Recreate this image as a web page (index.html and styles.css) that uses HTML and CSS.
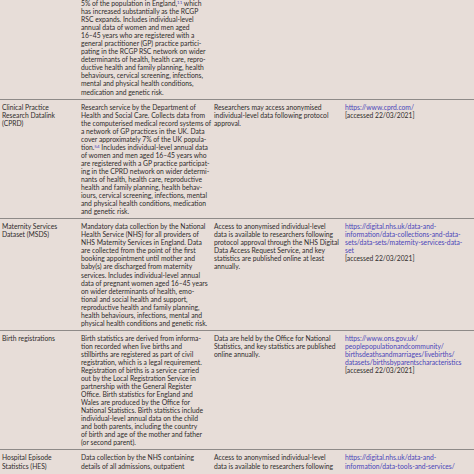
FILE: index.html
```html
<!DOCTYPE html>
<html>
<head>
<meta charset="utf-8">
<link rel="stylesheet" href="styles.css">
</head>
<body>
<div class="table">
  <div class="row first">
    <div class="cell c1"></div>
    <div class="cell c2">5% of the population in England,<sup class="ref">11</sup> which<br>has increased substantially as the RCGP<br>RSC expands. Includes individual-level<br>annual data of women and men aged<br>16–45 years who are registered with a<br>general practitioner (GP) practice partici-<br>pating in the RCGP RSC network on wider<br>determinants of health, health care, repro-<br>ductive health and family planning, health<br>behaviours, cervical screening, infections,<br>mental and physical health conditions,<br>medication and genetic risk.</div>
    <div class="cell c3"></div>
    <div class="cell c4"></div>
  </div>
  <div class="row">
    <div class="cell c1">Clinical Practice<br>Research Datalink<br>(CPRD)</div>
    <div class="cell c2">Research service by the Department of<br>Health and Social Care. Collects data from<br>the computerised medical record systems of<br>a network of GP practices in the UK. Data<br>cover approximately 7% of the UK popula-<br>tion.<sup class="ref">54</sup> Includes individual-level annual data<br>of women and men aged 16–45 years who<br>are registered with a GP practice participat-<br>ing in the CPRD network on wider determi-<br>nants of health, health care, reproductive<br>health and family planning, health behav-<br>iours, cervical screening, infections, mental<br>and physical health conditions, medication<br>and genetic risk.</div>
    <div class="cell c3">Researchers may access anonymised<br>individual-level data following protocol<br>approval.</div>
    <div class="cell c4"><span class="link">https://www.cprd.com/</span><br>[accessed 22/03/2021]</div>
  </div>
  <div class="row">
    <div class="cell c1">Maternity Services<br>Dataset (MSDS)</div>
    <div class="cell c2">Mandatory data collection by the National<br>Health Service (NHS) for all providers of<br>NHS Maternity Services in England. Data<br>are collected from the point of the first<br>booking appointment until mother and<br>baby(s) are discharged from maternity<br>services. Includes individual-level annual<br>data of pregnant women aged 16–45 years<br>on wider determinants of health, emo-<br>tional and social health and support,<br>reproductive health and family planning,<br>health behaviours, infections, mental and<br>physical health conditions and genetic risk.</div>
    <div class="cell c3">Access to anonymised individual-level<br>data is available to researchers following<br>protocol approval through the NHS Digital<br>Data Access Request Service, and key<br>statistics are published online at least<br>annually.</div>
    <div class="cell c4"><span class="link">https://digital.nhs.uk/data-and-<br>information/data-collections-and-data-<br>sets/data-sets/maternity-services-data-<br>set</span><br>[accessed 22/03/2021]</div>
  </div>
  <div class="row">
    <div class="cell c1">Birth registrations</div>
    <div class="cell c2">Birth statistics are derived from informa-<br>tion recorded when live births and<br>stillbirths are registered as part of civil<br>registration, which is a legal requirement.<br>Registration of births is a service carried<br>out by the Local Registration Service in<br>partnership with the General Register<br>Office. Birth statistics for England and<br>Wales are produced by the Office for<br>National Statistics. Birth statistics include<br>individual-level annual data on the child<br>and both parents, including the country<br>of birth and age of the mother and father<br>(or second parent).</div>
    <div class="cell c3">Data are held by the Office for National<br>Statistics, and key statistics are published<br>online annually.</div>
    <div class="cell c4"><span class="link">https://www.ons.gov.uk/<br>peoplepopulationandcommunity/<br>birthsdeathsandmarriages/livebirths/<br>datasets/birthsbyparentscharacteristics</span><br>[accessed 22/03/2021]</div>
  </div>
  <div class="row">
    <div class="cell c1">Hospital Episode<br>Statistics (HES)</div>
    <div class="cell c2">Data collection by the NHS containing<br>details of all admissions, outpatient</div>
    <div class="cell c3">Access to anonymised individual-level<br>data is available to researchers following</div>
    <div class="cell c4"><span class="link">https://digital.nhs.uk/data-and-<br>information/data-tools-and-services/</span></div>
  </div>
</div>
</body>
</html>
```

FILE: styles.css
```css
html, body {
  margin: 0;
  padding: 0;
  background: #e7ddd8;
  overflow: hidden;
}
body {
  width: 474px;
  height: 474px;
  font-family: Lato, "Noto Sans", sans-serif;
  font-size: 6.75px;
  line-height: 8.05px;
  color: #2f2b2b;
}
.table {
  margin-top: -3px;
}
.row {
  display: grid;
  grid-template-columns: 81px 133px 131px 1fr;
  border-top: 1px solid #8e8a88;
}
.row.first {
  border-top: none;
}
.cell {
  padding: 3px 0 3px 0;
  white-space: nowrap;
}
.first .cell {
  padding-top: 2px;
}
.c1 { padding-left: 2px; }
.link { color: #4a45b8; }
.ref {
  color: #4a45b8;
  font-size: 4.5px;
  line-height: 0;
  vertical-align: 2.5px;
}
```
